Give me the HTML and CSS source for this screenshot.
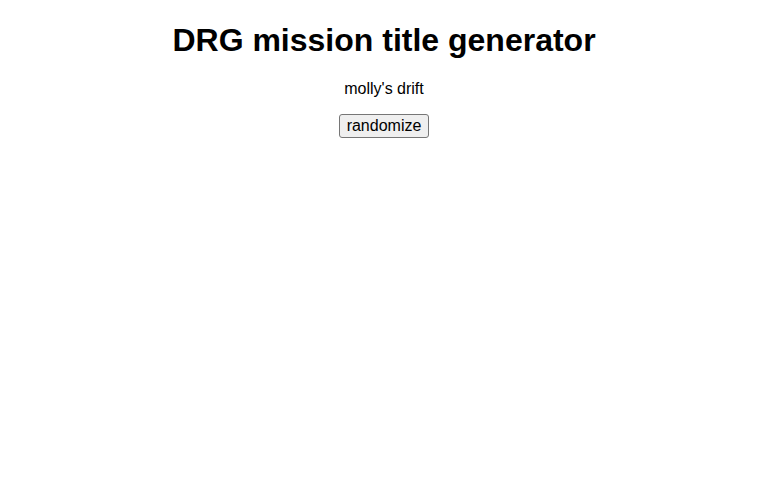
FILE: index.html
```html
<!DOCTYPE html>
<html lang="en">
<head>
    <meta charset="UTF-8">
    <meta name="viewport" content="width=device-width, initial-scale=1.0">
    <title>DRG mission title generator</title>
    <link rel="stylesheet" href="styles.css">
</head>
<body>
    <div class="generator">
        <h1 class="title">DRG mission title generator</h1>
        <p id="missionName" class="mission-name">molly's drift</p>
        <button id="randomizeButton" class="randomize" onclick="randomize()">randomize</button>
    </div>

    <script>
        const firstWords = ["molly's", "karl's", "rock and", "dark", "bosco's", "lost", "deep", "mineral"];
        const secondWords = ["drift", "stone", "descent", "tunnel", "hollow", "run", "pocket", "vein"];

        function pick(list) {
            return list[Math.floor(Math.random() * list.length)];
        }

        function randomize() {
            document.getElementById('missionName').textContent = pick(firstWords) + ' ' + pick(secondWords);
        }
    </script>
</body>
</html>
```

FILE: styles.css
```css
body {
    font-family: "Liberation Sans", Arial, sans-serif;
    margin: 0;
    padding: 0 8px;
    background-color: white;
    color: black;
}

.generator {
    text-align: center;
}

.title {
    font-size: 32px;
    font-weight: bold;
    margin: 21.5px 0 21.5px;
}

.mission-name {
    font-size: 16px;
    margin: 16px 0;
}

.randomize {
    font-family: "Liberation Sans", Arial, sans-serif;
    font-size: 16px;
    color: black;
    background-color: #efefef;
    border: 1px solid #767676;
    border-radius: 3px;
    padding: 2px 7px;
    cursor: pointer;
}

.randomize:hover {
    background-color: #e5e5e5;
}
```
